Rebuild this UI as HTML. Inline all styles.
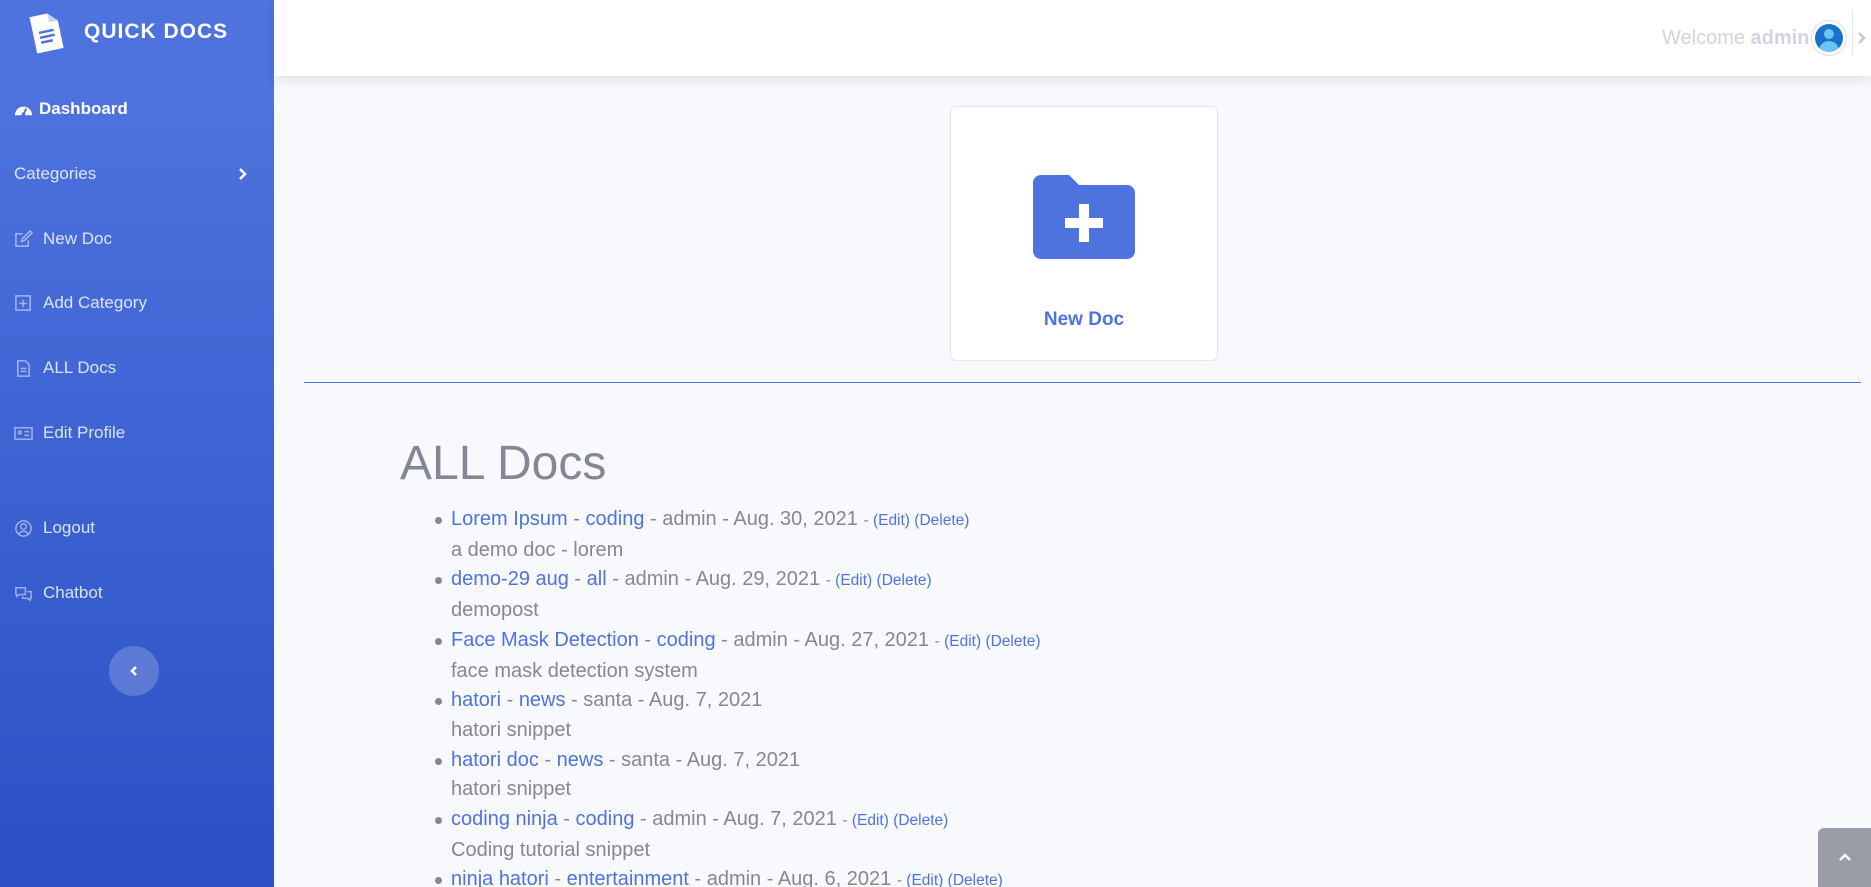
<!DOCTYPE html>
<html style="background:#f8f9fc;width:1871px;height:887px;overflow:hidden"><head><meta charset="utf-8"><style>
*{margin:0;padding:0;box-sizing:border-box}
body{width:1871px;height:887px;overflow:hidden;background:#f8f9fc;font-family:"Liberation Sans",sans-serif}
#w{position:relative;width:1871px;height:887px;overflow:hidden}
.sb{position:absolute;left:0;top:0;width:274px;height:887px;background:linear-gradient(180deg,#4e73df 10%,#2a50c4 100%);color:rgba(255,255,255,.8)}
.brand{position:absolute;left:84px;top:20px;font-weight:900;font-size:21px;letter-spacing:1px;color:#fff}
.it{position:absolute;left:14px;font-size:17px;display:flex;align-items:center;gap:10px;color:rgba(255,255,255,.82)}
.it svg{width:19px;height:19px}
.hdr{position:absolute;left:274px;top:0;right:0;height:76px;background:#fff;box-shadow:0 4px 12px rgba(58,59,69,.12)}
.card{position:absolute;left:950px;top:106px;width:268px;height:255px;background:#fff;border:1px solid #e3e6f0;border-radius:6px}
a{color:#4e73df;text-decoration:none}
ul{position:absolute;left:451px;top:505px;font-size:20px;color:#858796;line-height:29.7px;list-style:none}
li{position:relative}
li:before{content:"";position:absolute;left:-16px;top:12px;width:7px;height:7px;border-radius:50%;background:#858796}
li small{font-size:15.5px}
</style></head><body><div id="w">
<div class="sb">
<svg style="position:absolute;left:27px;top:10px" width="40" height="45" viewBox="0 0 40 45"><g transform="rotate(-12 20 22)"><path d="M6 4h18l9 9v28H6z" fill="#fff"/><path d="M24 4v9h9" fill="#c8d4f6"/><rect x="12" y="20" width="15" height="2.5" fill="#4e73df"/><rect x="12" y="25" width="15" height="2.5" fill="#4e73df"/><rect x="12" y="30" width="12" height="2.5" fill="#4e73df"/></g></svg>
<div class="brand">QUICK DOCS</div>
<div class="it" style="top:99px;color:#fff;font-weight:bold;gap:6px"><svg viewBox="0 0 20 20"><path d="M1 16a9 9 0 0118 0z" fill="#fff"/><circle cx="10" cy="15" r="2" fill="#4e73df"/><path d="M10 15l3-6" stroke="#4e73df" stroke-width="2"/></svg>Dashboard</div>
<div class="it" style="top:164px">Categories</div>
<svg style="position:absolute;left:238px;top:167px" width="10" height="14" viewBox="0 0 10 14"><path d="M2 2l5 5-5 5" stroke="#fff" stroke-width="2.5" fill="none"/></svg>
<div class="it" style="top:229px"><svg viewBox="0 0 20 20" fill="none" stroke="rgba(255,255,255,.5)" stroke-width="1.6"><path d="M15 11v6H2V4h7"/><path d="M8 12l1-3 8-8 2 2-8 8z"/></svg>New Doc</div>
<div class="it" style="top:293px"><svg viewBox="0 0 20 20" fill="none" stroke="rgba(255,255,255,.5)" stroke-width="1.6"><rect x="2" y="2" width="15" height="15"/><path d="M9.5 6v8M5.5 10h8"/></svg>Add Category</div>
<div class="it" style="top:358px"><svg viewBox="0 0 20 20" fill="none" stroke="rgba(255,255,255,.5)" stroke-width="1.6"><path d="M4 2h8l4 4v12H4z"/><path d="M7 10h6M7 13h6"/></svg>ALL Docs</div>
<div class="it" style="top:423px"><svg viewBox="0 0 20 20" fill="none" stroke="rgba(255,255,255,.5)" stroke-width="1.6"><rect x="1" y="4" width="18" height="12"/><circle cx="6" cy="9" r="1.5"/><path d="M11 8h5M11 12h5"/></svg>Edit Profile</div>
<div class="it" style="top:518px"><svg viewBox="0 0 20 20" fill="none" stroke="rgba(255,255,255,.5)" stroke-width="1.6"><circle cx="10" cy="10" r="8"/><circle cx="10" cy="8" r="3"/><path d="M5 16c2-4 8-4 10 0"/></svg>Logout</div>
<div class="it" style="top:583px"><svg viewBox="0 0 20 20" fill="none" stroke="rgba(255,255,255,.5)" stroke-width="1.6"><path d="M2 4h10v7H6l-3 2v-2H2z"/><path d="M14 8h4v7h-1v2l-3-2H9v-2"/></svg>Chatbot</div>
<div style="position:absolute;left:109px;top:646px;width:50px;height:50px;border-radius:50%;background:rgba(255,255,255,.2)"></div>
<svg style="position:absolute;left:129px;top:665px" width="10" height="12" viewBox="0 0 10 12"><path d="M7 2L3 6l4 4" stroke="#fff" stroke-width="2.5" fill="none"/></svg>
</div>
<div class="hdr">
<div style="position:absolute;left:1388px;top:27px;font-size:20px;color:#d1d3e2">Welcome <b>admin</b></div>
<div style="position:absolute;left:1537px;top:20px;width:36px;height:36px;border-radius:50%;background:#fff;border:1px solid #dde;"><div style="position:absolute;left:3px;top:3px;width:28px;height:28px;border-radius:50%;background:#1a73c9;overflow:hidden"><div style="position:absolute;left:9px;top:5px;width:10px;height:10px;border-radius:50%;background:#6cc3f5"></div><div style="position:absolute;left:4px;top:17px;width:20px;height:14px;border-radius:10px 10px 0 0;background:#6cc3f5"></div></div></div>
<div style="position:absolute;left:1578px;top:10px;width:1px;height:45px;background:#e3e6f0"></div>
<svg style="position:absolute;left:1583px;top:31px" width="10" height="14" viewBox="0 0 10 14"><path d="M2 2l5 5-5 5" stroke="#c5c8d6" stroke-width="2.5" fill="none"/></svg>
</div>
<div class="card">
<svg style="position:absolute;left:82px;top:68px" width="102" height="84" viewBox="0 0 102 84"><path d="M8 0h28l10 10h48a8 8 0 018 8v58a8 8 0 01-8 8H8a8 8 0 01-8-8V8a8 8 0 018-8z" fill="#4e73df"/><path d="M46 29h10v14h14v10H56v14H46V53H32V43h14z" fill="#fff"/></svg>
<div style="position:absolute;left:0;right:0;top:202px;text-align:center;font-weight:bold;font-size:19px;color:#4e73df">New Doc</div>
</div>
<div style="position:absolute;left:304px;top:382px;width:1557px;height:1px;background:#4e73df"></div>
<div style="position:absolute;left:400px;top:436px;font-size:48px;color:#858796">ALL Docs</div>
<ul>
<li><a>Lorem Ipsum</a> - <a>coding</a> - admin - Aug. 30, 2021 <small>- <a>(Edit)</a> <a>(Delete)</a></small><br>a demo doc - lorem</li>
<li><a>demo-29 aug</a> - <a>all</a> - admin - Aug. 29, 2021 <small>- <a>(Edit)</a> <a>(Delete)</a></small><br>demopost</li>
<li><a>Face Mask Detection</a> - <a>coding</a> - admin - Aug. 27, 2021 <small>- <a>(Edit)</a> <a>(Delete)</a></small><br>face mask detection system</li>
<li><a>hatori</a> - <a>news</a> - santa - Aug. 7, 2021<br>hatori snippet</li>
<li><a>hatori doc</a> - <a>news</a> - santa - Aug. 7, 2021<br>hatori snippet</li>
<li><a>coding ninja</a> - <a>coding</a> - admin - Aug. 7, 2021 <small>- <a>(Edit)</a> <a>(Delete)</a></small><br>Coding tutorial snippet</li>
<li><a>ninja hatori</a> - <a>entertainment</a> - admin - Aug. 6, 2021 <small>- <a>(Edit)</a> <a>(Delete)</a></small></li>
</ul>
<div style="position:absolute;left:1818px;top:828px;width:53px;height:59px;background:#9a9ca8;border-radius:6px 0 0 0"></div>
<svg style="position:absolute;left:1838px;top:852px" width="14" height="10" viewBox="0 0 14 10"><path d="M2 8l5-5 5 5" stroke="#fff" stroke-width="2.5" fill="none"/></svg>
</div></body></html>
